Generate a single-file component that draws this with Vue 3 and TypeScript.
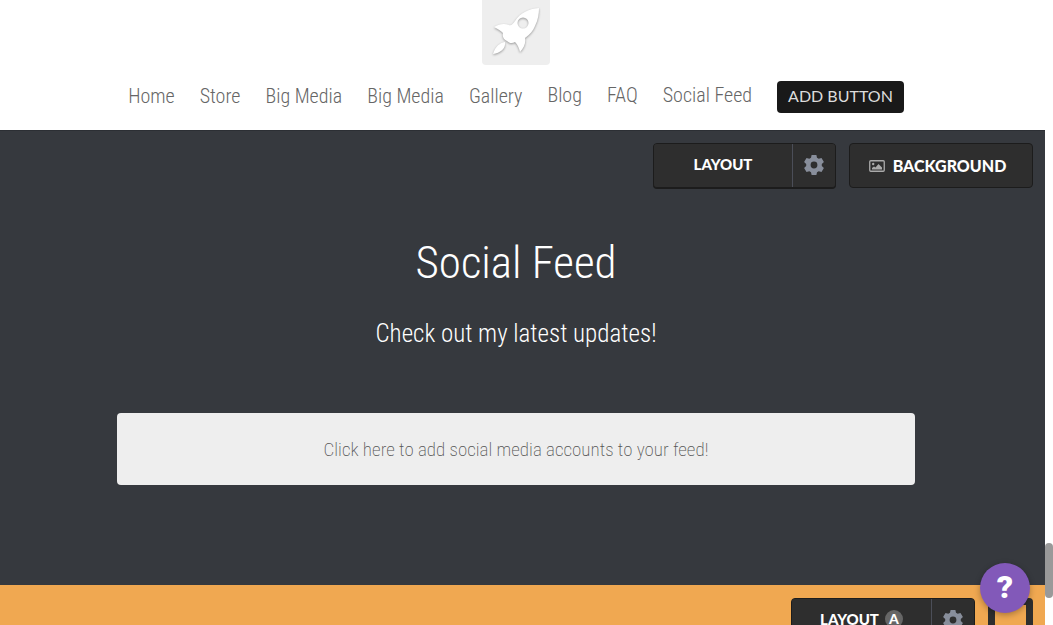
<script setup lang="ts">
interface NavLink {
  label: string
  raised: boolean
}

const links: NavLink[] = [
  { label: 'Home', raised: false },
  { label: 'Store', raised: false },
  { label: 'Big Media', raised: false },
  { label: 'Big Media', raised: false },
  { label: 'Gallery', raised: false },
  { label: 'Blog', raised: true },
  { label: 'FAQ', raised: true },
  { label: 'Social Feed', raised: true },
]

const gearPath =
  'M7.6 0h4.8l.6 2.8 1.7 1 2.8-.9 2.4 4.1-2.1 2v2l2.1 2-2.4 4.1-2.8-.9-1.7 1-.6 2.8H7.6L7 17.2l-1.7-1-2.8.9L.1 13l2.1-2V9L.1 7l2.4-4.1 2.8.9 1.7-1zM10 6.6a3.4 3.4 0 1 0 0 6.8 3.4 3.4 0 0 0 0-6.8z'
</script>

<template>
  <div class="window">
    <div class="page">
      <header class="header">
        <a href="#" class="logo" aria-label="Site logo">
          <svg width="68" height="65" viewBox="0 0 68 65">
            <g class="rocket">
              <path
                d="M57 8C46 9 38 13 33 21C31 24 29 26 27 25C22 23 17 24 12 27C16 29 19 31 21 33C20 37 22 40 25 41C27 43 30 44 33 42C36 45 37 48 38 52C42 48 44 43 43 38C48 34 51 31 53 26C56 20 57 14 57 8ZM41 17.500A5.500 5.500 0 1 1 41 28.500A5.500 5.500 0 1 1 41 17.500Z"
                fill-rule="evenodd"
              />
              <path d="M23 42C17 43 13 47 11 54C18 53 24 49 23 42Z" />
            </g>
          </svg>
        </a>
        <nav class="nav">
          <a v-for="(link, i) in links" :key="i" href="#" class="link" :class="{ raised: link.raised }">{{ link.label }}</a>
          <button type="button" class="add">ADD BUTTON</button>
        </nav>
      </header>

      <section class="social">
        <div class="tools">
          <div class="split ledge">
            <button type="button" class="tool main">LAYOUT</button>
            <button type="button" class="tool gear" aria-label="Layout settings">
              <svg width="20" height="20" viewBox="0 0 20 20"><path :d="gearPath" fill-rule="evenodd" /></svg>
            </button>
          </div>
          <button type="button" class="tool background">
            <svg width="16" height="12" viewBox="0 0 16 12">
              <rect x=".75" y=".75" width="14.500" height="10.500" rx="1" fill="none" stroke="#aaa" stroke-width="1.300" />
              <circle cx="4.200" cy="4" r="1.200" fill="#aaa" />
              <path d="M3 9.500V8L5 6.500L6.500 7.500L9.500 4L13 7.500V9.500Z" fill="#aaa" />
            </svg>
            <span>BACKGROUND</span>
          </button>
        </div>
        <div class="content">
          <h1>Social Feed</h1>
          <p>Check out my latest updates!</p>
          <button type="button" class="feed">Click here to add social media accounts to your feed!</button>
        </div>
      </section>

      <section class="next">
        <div class="tools">
          <div class="split">
            <button type="button" class="tool main">LAYOUT <span class="badge">A</span></button>
            <button type="button" class="tool gear" aria-label="Section settings">
              <svg width="20" height="20" viewBox="0 0 20 20"><path :d="gearPath" fill-rule="evenodd" /></svg>
            </button>
          </div>
          <button type="button" class="swatch" aria-label="Background colour"></button>
        </div>
      </section>
    </div>
    <div class="track"><div class="thumb"></div></div>
    <button type="button" class="help" aria-label="Help">?</button>
  </div>
</template>

<style>
body {
  margin: 0;
  overflow: hidden;
}
</style>

<style scoped>
.window {
  position: relative;
  display: flex;
  height: 100vh;
  overflow: hidden;
  background: #fff;
  font-family: "Roboto Condensed", Roboto, sans-serif;
}
.window * {
  box-sizing: border-box;
}
button {
  margin: 0;
  padding: 0;
  border: 0;
  cursor: pointer;
}
.page {
  flex: 1;
  display: flex;
  flex-direction: column;
  min-width: 0;
}
.header {
  flex: none;
  display: flex;
  flex-direction: column;
  align-items: center;
  height: 130px;
  padding-right: 13px;
}
.logo {
  display: block;
  height: 65px;
  border-radius: 0 0 4px 4px;
  background: #eee;
  overflow: hidden;
}
.logo svg {
  display: block;
}
.rocket {
  fill: #fff;
  filter: drop-shadow(0 1px 1px #999);
}
.nav {
  display: flex;
  align-items: center;
  gap: 25px;
  margin-top: 15px;
  white-space: nowrap;
}
.link {
  padding-bottom: 2px;
  color: #666;
  font-size: 20px;
  font-weight: 300;
  line-height: 30px;
  text-decoration: none;
}
.raised {
  padding-bottom: 4px;
}
.add {
  height: 32px;
  padding: 0 11px 2px;
  border-radius: 4px;
  background: #191919;
  color: #ddd;
  font: 400 16px/30px Lato, sans-serif;
}
.social {
  flex: none;
  height: 455px;
  padding: 13px 12px 0 0;
  background: #36393e;
  box-shadow: inset 0 1px 0 #2c2f34;
}
.tools {
  display: flex;
  justify-content: flex-end;
  gap: 13px;
}
.split {
  display: flex;
  height: 45px;
  border: 1px solid #1c1c1c;
  border-radius: 4px;
  background: #2e2e2e;
}
.ledge {
  box-shadow: 0 1px 0 #1c1c1c;
}
.tool {
  display: flex;
  align-items: center;
  justify-content: center;
  background: #2e2e2e;
  color: #fff;
  font: 900 15px/20px Lato, sans-serif;
}
.main {
  width: 138px;
  padding-bottom: 4px;
  border-radius: 3px 0 0 3px;
}
.gear {
  width: 43px;
  padding-bottom: 2px;
  border-left: 1px solid #4b4e58;
  border-radius: 0 3px 3px 0;
}
.gear svg {
  fill: #888e9b;
}
.background {
  gap: 8px;
  width: 184px;
  height: 45px;
  padding-right: 7px;
  border: 1px solid #1c1c1c;
  border-radius: 4px;
  font-size: 16px;
}
.content {
  display: flex;
  flex-direction: column;
  align-items: center;
  padding: 45px 1px 0 0;
  color: #fff;
}
h1 {
  margin: 0;
  font-size: 45px;
  font-weight: 300;
  line-height: 60px;
}
p {
  margin: 25px 0 0;
  font-size: 25px;
  font-weight: 350;
  line-height: 32px;
}
.feed {
  width: calc(100% - 234px);
  height: 72px;
  margin-top: 63px;
  padding-top: 2px;
  border-radius: 4px;
  background: #eee;
  color: #555;
  font: 200 19px/28px "Roboto Condensed", Roboto, sans-serif;
}
.next {
  flex: 1;
  min-height: 40px;
  padding: 13px 12px 0 0;
  background: #f0a851;
}
.next .main {
  width: 139px;
}
.badge {
  width: 18px;
  height: 18px;
  margin-left: 6px;
  border-radius: 50%;
  background: #666;
  font-size: 14px;
  line-height: 18px;
  text-align: center;
}
.swatch {
  width: 45px;
  height: 45px;
  border: 7px solid #2e2e2e;
  border-radius: 4px;
  background: #f0a851;
}
.track {
  display: flex;
  align-items: flex-end;
  width: 8px;
  padding-bottom: 27px;
  background: #fff;
}
.thumb {
  width: 8px;
  height: 55px;
  border-radius: 4px;
  background: #999;
}
.help {
  position: absolute;
  right: 23px;
  bottom: 12px;
  width: 50px;
  height: 50px;
  padding-bottom: 2px;
  border-radius: 50%;
  background: #8259b9;
  box-shadow: 0 2px 6px rgba(0, 0, 0, 0.3);
  color: #fff;
  font: 900 32px/48px Roboto, sans-serif;
}
</style>
